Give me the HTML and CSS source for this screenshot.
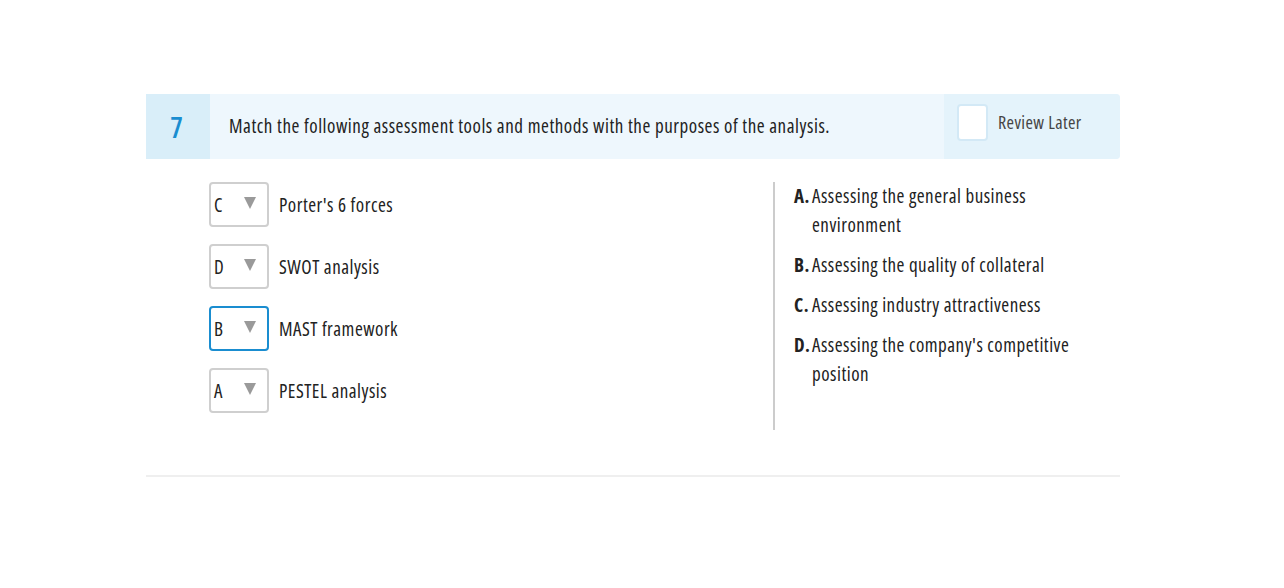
FILE: index.html
```html
<!DOCTYPE html>
<html>
<head>
<meta charset="utf-8">
<link rel="stylesheet" href="styles.css">
</head>
<body>
<div class="question">
  <div class="q-head">
    <div class="q-num">7</div>
    <div class="q-text">Match the following assessment tools and methods with the purposes of the analysis.</div>
    <div class="q-review">
      <span class="checkbox"></span>
      <span class="review-label">Review Later</span>
    </div>
  </div>
  <div class="q-body">
    <div class="left-col">
      <div class="match-row">
        <div class="select"><span class="sel-val">C</span><span class="arrow"></span></div>
        <span class="item-label">Porter's 6 forces</span>
      </div>
      <div class="match-row">
        <div class="select"><span class="sel-val">D</span><span class="arrow"></span></div>
        <span class="item-label">SWOT analysis</span>
      </div>
      <div class="match-row">
        <div class="select focused"><span class="sel-val">B</span><span class="arrow"></span></div>
        <span class="item-label">MAST framework</span>
      </div>
      <div class="match-row">
        <div class="select"><span class="sel-val">A</span><span class="arrow"></span></div>
        <span class="item-label">PESTEL analysis</span>
      </div>
    </div>
    <div class="right-col">
      <div class="opt"><b class="opt-key">A.</b><span class="opt-text">Assessing the general business environment</span></div>
      <div class="opt"><b class="opt-key">B.</b><span class="opt-text">Assessing the quality of collateral</span></div>
      <div class="opt"><b class="opt-key">C.</b><span class="opt-text">Assessing industry attractiveness</span></div>
      <div class="opt"><b class="opt-key">D.</b><span class="opt-text">Assessing the company's competitive position</span></div>
    </div>
  </div>
  <div class="q-foot"></div>
</div>
</body>
</html>
```
FILE: styles.css
```css
html, body {
  margin: 0;
  padding: 0;
  background: #ffffff;
}
body {
  font-family: "Open Sans", "Liberation Sans", sans-serif;
  font-stretch: 75%;
  color: #222;
  letter-spacing: 0.5px;
}
.question {
  width: 974px;
  margin: 94px 0 0 146px;
}
.q-head {
  display: flex;
  height: 65px;
  background: #eef7fd;
  border-radius: 0 4px 4px 0;
}
.q-num {
  width: 64px;
  flex: none;
  background: #d9eef9;
  color: #1a8dd0;
  font-size: 28px;
  font-weight: 600;
  letter-spacing: 0;
  display: flex;
  align-items: center;
  justify-content: center;
  padding-right: 3px;
  box-sizing: border-box;
}
.q-text {
  flex: 1;
  padding-left: 19px;
  font-size: 19px;
  letter-spacing: 0.55px;
  display: flex;
  align-items: center;
  padding-bottom: 2px;
}
.q-review {
  width: 176px;
  flex: none;
  background: #e4f3fb;
  border-radius: 0 4px 4px 0;
  display: flex;
  align-items: flex-start;
  padding: 10px 0 0 13px;
  box-sizing: border-box;
}
.checkbox {
  width: 27px;
  height: 33px;
  background: #fff;
  border: 2px solid #d3e9f6;
  border-radius: 4px;
  flex: none;
}
.review-label {
  margin-left: 10px;
  font-size: 18px;
  letter-spacing: 0.4px;
  color: #444;
  line-height: 36px;
}
.q-body {
  display: flex;
  padding: 23px 0 0 63px;
}
.left-col {
  width: 564px;
  flex: none;
  display: flex;
  flex-direction: column;
  gap: 17px;
}
.match-row {
  display: flex;
  align-items: center;
}
.select {
  width: 56px;
  height: 41px;
  border: 2px solid #cfcfcf;
  border-radius: 4px;
  display: flex;
  align-items: center;
  font-size: 19px;
  flex: none;
}
.select.focused {
  border-color: #1a8dd0;
}
.sel-val {
  width: 24px;
  padding-left: 3px;
}
.arrow {
  width: 0;
  height: 0;
  margin-left: 6px;
  border-left: 6px solid transparent;
  border-right: 6px solid transparent;
  border-top: 12px solid #9a9a9a;
  margin-top: -4px;
}
.item-label {
  margin-left: 10px;
  font-size: 19px;
}
.right-col {
  flex: none;
  border-left: 2px solid #cccccc;
  height: 248px;
  padding-left: 19px;
  width: 300px;
}
.opt {
  display: flex;
  font-size: 19px;
  line-height: 29px;
  margin-bottom: 11px;
}
.opt-key {
  font-weight: 700;
  width: 18px;
  flex: none;
}
.opt-text {
  width: 272px;
}
.q-foot {
  margin-top: 45px;
  height: 2px;
  background: #efefef;
}
```
